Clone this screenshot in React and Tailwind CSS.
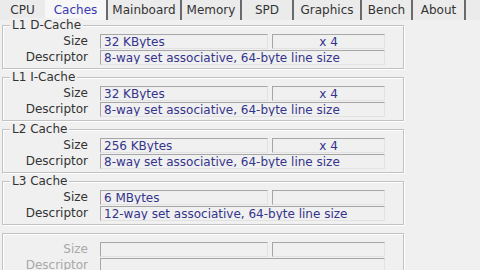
import React from "react";

const tabs = [
  { name: "CPU", w: "w-[45px]" },
  { name: "Caches", w: "w-[63px]", active: true },
  { name: "Mainboard", w: "w-[74px]" },
  { name: "Memory", w: "w-[60px]" },
  { name: "SPD", w: "w-[52px]" },
  { name: "Graphics", w: "w-[68px]" },
  { name: "Bench", w: "w-[51px]" },
  { name: "About", w: "w-[53px]" },
];

const caches = [
  { title: "L1 D-Cache", size: "32 KBytes", count: "x 4", desc: "8-way set associative, 64-byte line size" },
  { title: "L1 I-Cache", size: "32 KBytes", count: "x 4", desc: "8-way set associative, 64-byte line size" },
  { title: "L2 Cache", size: "256 KBytes", count: "x 4", desc: "8-way set associative, 64-byte line size" },
  { title: "L3 Cache", size: "6 MBytes", count: "", desc: "12-way set associative, 64-byte line size" },
  { title: "", size: "", count: "", desc: "", disabled: true },
];

const Field = ({ w, children, center }) => (
  <div
    className={`${w} h-[15px] border-t border-l border-t-[#a6a6a6] border-l-[#a6a6a6] border-b border-r border-b-[#e2e2e2] border-r-[#e2e2e2] flex items-center px-[3px] text-[#34348c] leading-none whitespace-nowrap overflow-hidden ${
      center ? "justify-center" : ""
    }`}
  >
    {children}
  </div>
);

const CacheGroup = ({ cache }) => {
  const label = cache.disabled ? "text-[#a8a8a8]" : "text-[#333333]";
  return (
    <div className="relative w-[402px] h-[44px] border border-[#c2c2c2] shadow-[inset_1px_1px_0_#ffffff,1px_1px_0_#ffffff] pt-[8px] leading-[15px]">
      {cache.title && (
        <span className="absolute left-[7px] top-[-8px] px-[2px] bg-[#f0f0f0] text-[#333333] leading-[14px]">
          {cache.title}
        </span>
      )}
      <div className="flex items-center h-[15px]">
        <div className={`w-[85px] text-right ${label}`}>Size</div>
        <div className="ml-[12px] flex gap-[4px]">
          <Field w="w-[168px]">{cache.size}</Field>
          <Field w="w-[113px]" center>
            {cache.count}
          </Field>
        </div>
      </div>
      <div className="flex items-center h-[15px] mt-[1px]">
        <div className={`w-[85px] text-right ${label}`}>Descriptor</div>
        <div className="ml-[12px]">
          <Field w="w-[285px]">{cache.desc}</Field>
        </div>
      </div>
    </div>
  );
};

export default function App() {
  return (
    <div
      className="w-[480px] h-[270px] bg-[#f0f0f0] overflow-hidden text-[12px]"
      style={{ fontFamily: '"DejaVu Sans", Verdana, sans-serif' }}
    >
      {/* tab strip */}
      <div className="flex h-[20px] bg-[#ebebeb]">
        {tabs.map((t) => (
          <div
            key={t.name}
            className={`${t.w} h-[20px] flex items-center justify-center ${
              t.active
                ? "bg-[#f7f7f7] text-[#3a3ab0] border-r-2 border-[#6a6a6a]"
                : "text-[#333333] " + (t.name === "CPU" ? "" : "border-r-2 border-[#6a6a6a]")
            }`}
          >
            {t.name}
          </div>
        ))}
      </div>

      {/* cache groups */}
      <div className="pl-[2px] pt-[5px] flex flex-col gap-[8px]">
        {caches.map((c, i) => (
          <CacheGroup key={i} cache={c} />
        ))}
      </div>
    </div>
  );
}
